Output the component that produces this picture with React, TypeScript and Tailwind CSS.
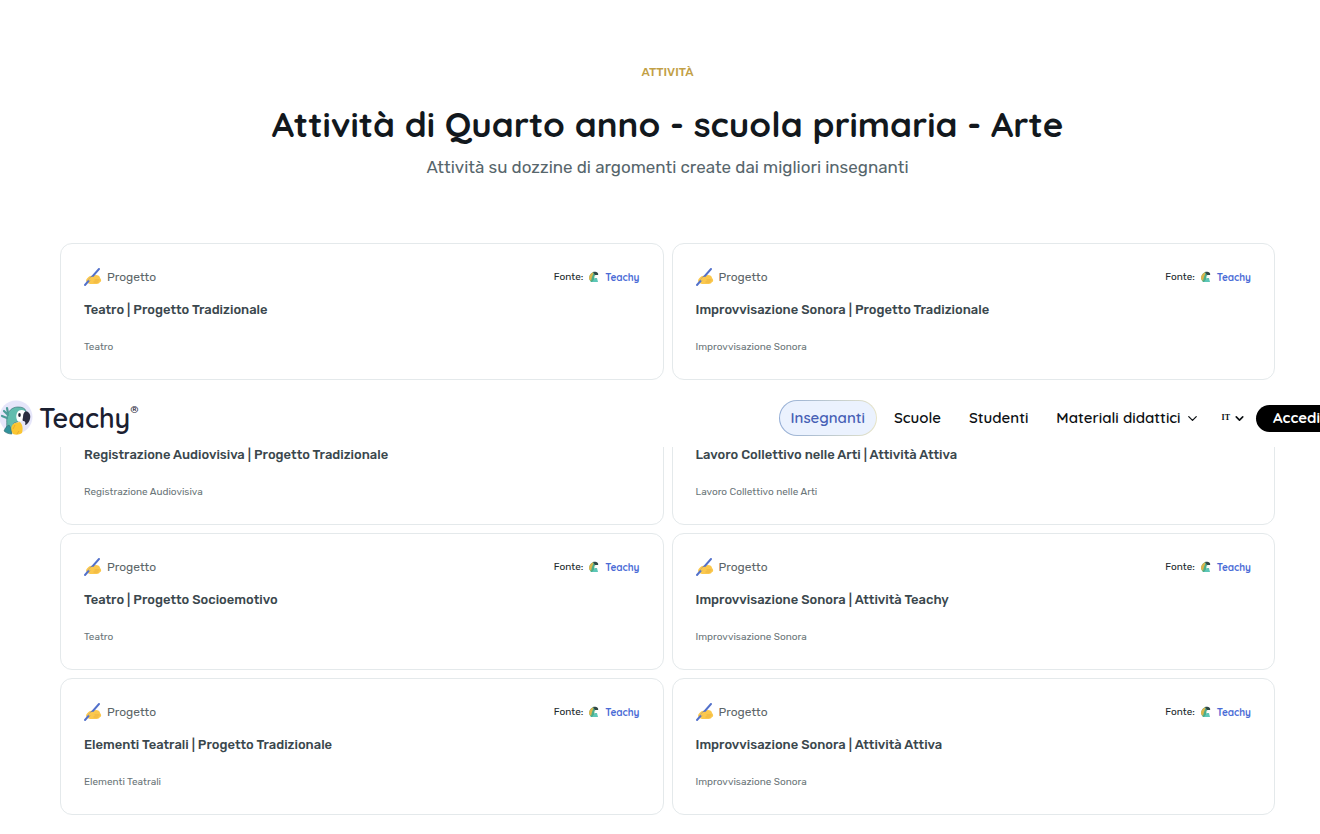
import { ChevronDown } from "lucide-react";

// covered: the floating header lies over the top line of the card
const ACTIVITIES = [
  { id: "a1", title: "Teatro | Progetto Tradizionale", topic: "Teatro", covered: false },
  { id: "a2", title: "Improvvisazione Sonora | Progetto Tradizionale", topic: "Improvvisazione Sonora", covered: false },
  { id: "a3", title: "Registrazione Audiovisiva | Progetto Tradizionale", topic: "Registrazione Audiovisiva", covered: true },
  { id: "a4", title: "Lavoro Collettivo nelle Arti | Attività Attiva", topic: "Lavoro Collettivo nelle Arti", covered: true },
  { id: "a5", title: "Teatro | Progetto Socioemotivo", topic: "Teatro", covered: false },
  { id: "a6", title: "Improvvisazione Sonora | Attività Teachy", topic: "Improvvisazione Sonora", covered: false },
  { id: "a7", title: "Elementi Teatrali | Progetto Tradizionale", topic: "Elementi Teatrali", covered: false },
  { id: "a8", title: "Improvvisazione Sonora | Attività Attiva", topic: "Improvvisazione Sonora", covered: false },
];

function ParrotLogo() {
  return (
    <svg viewBox="0 0 34 36" className="h-9 w-[34px] shrink-0" aria-hidden="true">
      <circle cx="16" cy="17" r="16.5" fill="#e6e6fa" />
      <path d="M5 31C8 26 6 22 7 17C8 11 12 7 18 7C22 7 25 8 26 11L20 21L14 23L11 33Z" fill="#62bcae" stroke="#326a70" strokeWidth="0.6" />
      <path d="M8 15L4 11M8 13L7 8M7 18L2 16" stroke="#4a9c98" strokeWidth="2.2" strokeLinecap="round" />
      <path d="M4 31C5 28 7 26 9 25C11 27 11 31 12 34C9 34 6 33 4 31Z" fill="#31929b" stroke="#326a70" strokeWidth="0.6" />
      <path d="M13 34C10 29 11 25 15 23L20 22C23 25 23 29 22 33C19 35 16 35 13 34Z" fill="#fbc632" />
      <path d="M17 13C18 10 22 9 25 11L24 18C22 22 18 23 17 20C16 18 16 15 17 13Z" fill="#fff" />
      <path d="M23 17C23 12 26 10 28 12C31 14 31 19 28 23C27 24 26 25 25 25C26 22 25 21 23 21C22 20 23 18 23 17Z" fill="#2c2d40" />
      <ellipse cx="19.5" cy="15" rx="1.3" ry="1.9" fill="#252838" />
      <path d="M15 25L13 29M19 31L17 34" stroke="#e09f2c" strokeWidth="0.7" />
    </svg>
  );
}

function ParrotMark() {
  return (
    <svg viewBox="0 0 12 12" className="size-3 shrink-0" aria-hidden="true">
      <path d="M3 11C0 8 1 3 5 1L9 2L7 5L6 11Z" fill="#4bad8b" />
      <path d="M1 8C1 4 3 2 6 1L4 6L3 10Z" fill="#dcb54d" />
      <path d="M5 1C8 0 11 2 10 4L7 4Z" fill="#2f4848" />
      <path d="M7 7L9 7L10 11L4 11Z" fill="#5cc7b8" />
      <path d="M7 4L9 5L6 7Z" fill="#f5f8ef" />
    </svg>
  );
}

function WritingHand() {
  return (
    <svg viewBox="0 0 18 18" className="size-[18px] shrink-0" aria-hidden="true">
      <path d="M2 13C2 11 4 9 6 8L12 7C14 7 16 8 16 10C18 12 17 14 16 14C15 16 13 16 11 16L6 16C4 15 3 15 2 13Z" fill="#fbc84d" />
      <path d="M11 12L15 12M10 14L14 14" stroke="#e6a937" strokeWidth="0.7" strokeLinecap="round" />
      <path d="M1 17L15 1" stroke="#5270cb" strokeWidth="1.9" strokeLinecap="round" />
      <path d="M4 12C6 9 8 8 10 9C11 11 8 12 6 13Z" fill="#fbc84d" />
    </svg>
  );
}

function ActivityCard({ title, topic, covered }: { title: string; topic: string; covered: boolean }) {
  return (
    <article className="rounded-xl border border-[#e4e9eb] bg-white px-[23px] pt-[23px] pb-6">
      <div className={`flex h-5 items-center justify-between ${covered ? "invisible" : ""}`}>
        <div className="flex items-center gap-[5px] text-[12px] text-[#5d6669]">
          <WritingHand />
          <span>Progetto</span>
        </div>
        <div className="flex items-center gap-[5px] text-[10px] text-[#20282b]">
          <span>Fonte:</span>
          <ParrotMark />
          <a href="#teachy" className="font-[Quicksand,Rubik,sans-serif] font-bold text-[#4a6bd6]">
            Teachy
          </a>
        </div>
      </div>
      <h2 className="mt-[11px] text-[13px] leading-6 font-medium text-[#3a474d]">{title}</h2>
      <p className="mt-[17px] text-[10px] leading-4 text-[#6b7679]">{topic}</p>
    </article>
  );
}

function SiteHeader() {
  return (
    <header className="absolute inset-x-0 top-[387px] z-10 overflow-hidden bg-white font-[Quicksand,Rubik,sans-serif]">
      <div className="-mr-[17px] flex h-[60px] items-center justify-between pt-0.5">
        <a href="#home" className="flex items-center gap-[5px] text-[#1b2030]">
          <ParrotLogo />
          <span className="flex items-start text-[27px] leading-9 font-semibold">
            Teachy
            <span className="font-[Rubik,sans-serif] text-[10px] leading-5 font-normal">®</span>
          </span>
        </a>
        <nav className="flex shrink-0 items-center text-[15px] font-semibold text-[#0c1013]">
          <a
            href="#insegnanti"
            className="mr-[17px] rounded-full bg-linear-to-r from-[#93add6] to-[#e7e4c8] p-px text-[#4660b5]"
          >
            <span className="flex h-[34px] items-center rounded-full bg-[#ebf2fe] px-[11px]">Insegnanti</span>
          </a>
          <a href="#scuole" className="mr-7">Scuole</a>
          <a href="#studenti" className="mr-7">Studenti</a>
          <button type="button" className="mr-[22px] flex items-center gap-1">
            Materiali didattici
            <ChevronDown size={15} />
          </button>
          <button type="button" className="mr-[10px] flex items-center gap-[3px]">
            <span className="font-['Liberation_Serif',serif] text-[8px] font-bold">IT</span>
            <ChevronDown size={13} strokeWidth={3} />
          </button>
          <button type="button" className="h-[27px] rounded-full bg-black px-[17px] font-bold text-white">
            Accedi
          </button>
        </nav>
      </div>
    </header>
  );
}

export default function App() {
  return (
    <div className="relative min-h-screen overflow-x-hidden bg-white font-[Rubik,Roboto,sans-serif]">
      <SiteHeader />
      <main className="pt-16 pr-[45px] pb-5 pl-[60px]">
        <div className="text-center">
          <p className="text-[12px] leading-4 font-medium text-[#c2a046]">ATTIVITÀ</p>
          <h1 className="mt-[22px] font-[Quicksand,Rubik,sans-serif] text-[35px] leading-11 font-bold text-[#12181d]">
            Attività di Quarto anno - scuola primaria - Arte
          </h1>
          <p className="mt-[9px] text-[17px] leading-6 text-[#57666c]">
            Attività su dozzine di argomenti create dai migliori insegnanti
          </p>
        </div>
        <section className="mt-16 grid grid-cols-2 gap-2">
          {ACTIVITIES.map((activity) => (
            <ActivityCard
              key={activity.id}
              title={activity.title}
              topic={activity.topic}
              covered={activity.covered}
            />
          ))}
        </section>
      </main>
    </div>
  );
}
